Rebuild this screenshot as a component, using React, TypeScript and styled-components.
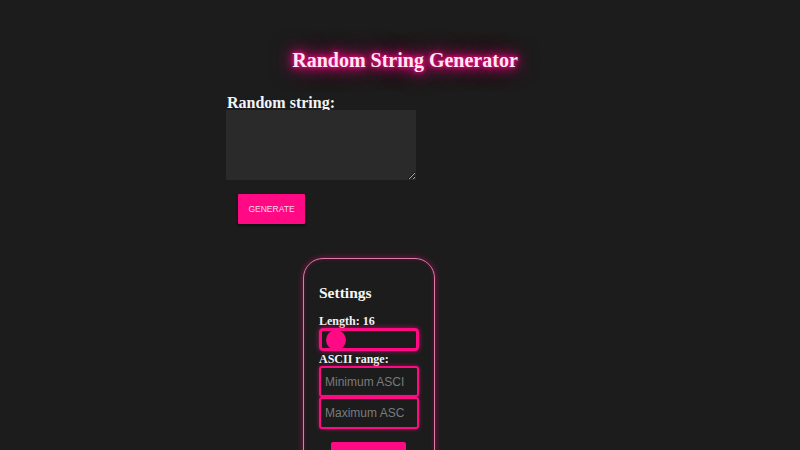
import React from 'react'
import styled, { createGlobalStyle } from 'styled-components'

const pink = '#ff0a84'

export default function App() {
    return (
        <>
            <GlobalStyle />
            <Page>
                <Title>Random String Generator</Title>

                <OutputBlock>
                    <FieldLabel htmlFor="output">Random string:</FieldLabel>
                    <Output id="output" readOnly />
                </OutputBlock>

                <GenerateButton>GENERATE</GenerateButton>

                <SettingsCard>
                    <CardHeading>Settings</CardHeading>

                    <SmallLabel>Length: 16</SmallLabel>
                    <SliderBox>
                        <Slider type="range" min={16} max={128} defaultValue={16} />
                    </SliderBox>

                    <SmallLabel>ASCII range:</SmallLabel>
                    <RangeInput placeholder="Minimum ASCII" />
                    <RangeInput placeholder="Maximum ASCII" />

                    <ApplyButton>APPLY</ApplyButton>
                </SettingsCard>
            </Page>
        </>
    )
}

const GlobalStyle = createGlobalStyle`
    html, body {
        margin: 0;
        background: #1c1c1c;
        height: 100%;
        overflow: hidden;
    }
    body {
        font-family: "Liberation Serif", "Times New Roman", serif;
        color: #f2f2f2;
    }
`

const Page = styled.main`
    display: flex;
    flex-direction: column;
    align-items: flex-start;
    width: 358px;
    margin-left: 226px;
    padding-top: 47px;
`

const Title = styled.h1`
    align-self: stretch;
    text-align: center;
    margin: 0 0 22px;
    font-size: 20px;
    line-height: 26px;
    font-weight: bold;
    color: #ffe8f3;
    text-shadow: 0 0 4px ${pink}, 0 0 10px ${pink}, 0 0 16px ${pink}, 0 0 24px #ff0a8488;
`

const OutputBlock = styled.div`
    display: flex;
    flex-direction: column;
`

const FieldLabel = styled.label`
    font-size: 16px;
    font-weight: bold;
    line-height: 15px;
    padding-left: 1px;
    color: #f4f4f4;
`

const Output = styled.textarea`
    width: 190px;
    height: 70px;
    box-sizing: border-box;
    margin: 0;
    border: none;
    background: #2a2a2a;
    color: #eee;
    outline: none;
`

const GenerateButton = styled.button`
    margin: 14px 0 0 12px;
    width: 67px;
    height: 30px;
    border: none;
    border-radius: 1px;
    background: ${pink};
    color: #ffd6ea;
    font-family: "Liberation Sans", Arial, sans-serif;
    font-size: 8.5px;
    box-shadow: 0 2px 3px rgba(0, 0, 0, 0.5);
    padding: 0;
`

const SettingsCard = styled.section`
    margin: 34px 0 0 77px;
    width: 132px;
    box-sizing: border-box;
    padding: 25px 15px 0 15px;
    height: 220px;
    border: 1.5px solid #e27aa8;
    border-radius: 20px;
    box-shadow: 0 0 6px #ff0a8477, inset 0 0 4px #ff0a8444;
    display: flex;
    flex-direction: column;
    align-items: flex-start;
`

const CardHeading = styled.h3`
    margin: 0 0 12px;
    font-size: 15.5px;
    line-height: 18px;
    font-weight: bold;
    color: #f6f6f6;
`

const SmallLabel = styled.div`
    font-size: 12px;
    font-weight: bold;
    line-height: 14px;
    color: #f4f4f4;
`

const SliderBox = styled.div`
    width: 100px;
    height: 23px;
    box-sizing: border-box;
    border: 3px solid ${pink};
    border-radius: 4px;
    box-shadow: 0 0 5px #ff0a84aa;
    margin-bottom: 1px;
    display: flex;
    align-items: center;
`

const Slider = styled.input`
    appearance: none;
    -webkit-appearance: none;
    width: 100%;
    height: 17px;
    margin: 0;
    padding: 0 0 0 4px;
    background: transparent;
    outline: none;

    &::-webkit-slider-runnable-track {
        height: 17px;
        background: transparent;
    }
    &::-webkit-slider-thumb {
        -webkit-appearance: none;
        width: 20px;
        height: 20px;
        margin-top: -1.5px;
        border-radius: 50%;
        background: ${pink};
        border: none;
    }
`

const RangeInput = styled.input`
    width: 100px;
    height: 32px;
    box-sizing: border-box;
    margin: 0;
    padding: 0 12px 0 4px;
    border: 2px solid ${pink};
    border-radius: 3px;
    background: #1c1c1c;
    box-shadow: 0 0 4px #ff0a8488;
    color: #ddd;
    font-family: "Liberation Sans", Arial, sans-serif;
    font-size: 12px;
    outline: none;

    &::placeholder {
        color: #7a7a7a;
    }
`

const ApplyButton = styled.button`
    margin: 13px 0 0 12px;
    width: 75px;
    height: 36px;
    border: none;
    border-radius: 2px;
    background: ${pink};
    color: #ffd6ea;
    font-family: "Liberation Sans", Arial, sans-serif;
    font-size: 8.5px;
    padding: 0;
`
